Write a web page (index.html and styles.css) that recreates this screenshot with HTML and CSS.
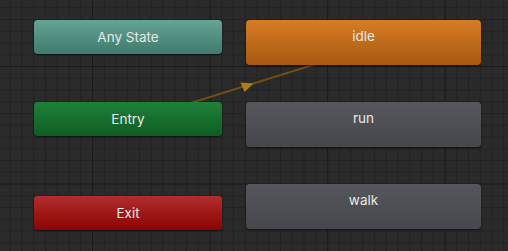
FILE: index.html
```html
<!DOCTYPE html>
<html>
<head>
<meta charset="utf-8">
<link rel="stylesheet" href="styles.css">
</head>
<body>
<div class="graph">
  <svg class="links" width="508" height="251" viewBox="0 0 508 251">
    <line x1="128" y1="122.5" x2="363" y2="49.4" class="link"/>
    <polygon points="253.5,83.5 240.5,82.5 244.5,92" class="arrow"/>
  </svg>
  <div class="node any">Any State</div>
  <div class="node entry">Entry</div>
  <div class="node exit">Exit</div>
  <div class="node state idle">idle</div>
  <div class="node state plain run">run</div>
  <div class="node state plain walk">walk</div>
</div>
</body>
</html>
```
FILE: styles.css
```css
html, body {
  margin: 0;
  padding: 0;
  background: #282828;
}
.graph {
  position: relative;
  width: 508px;
  height: 251px;
  overflow: hidden;
  background-color: #2a2a2a;
  background-image:
    linear-gradient(to right, #1b1b1b 1px, transparent 1px),
    linear-gradient(to bottom, #1b1b1b 1px, transparent 1px),
    linear-gradient(to right, #222222 1px, transparent 1px),
    linear-gradient(to bottom, #222222 1px, transparent 1px);
  background-size: 117.6px 117.6px, 117.6px 117.6px, 11.76px 11.76px, 11.76px 11.76px;
  background-position: 92px 66px, 92px 66px, 92px 66px, 92px 66px;
  font-family: Inter, "Noto Sans", sans-serif;
}
.links {
  position: absolute;
  left: 0;
  top: 0;
}
.link {
  stroke: #7a5410;
  stroke-width: 2;
  opacity: 0.9;
}
.arrow {
  fill: #b07a14;
}
.node {
  position: absolute;
  left: 34px;
  width: 188px;
  height: 34px;
  box-sizing: border-box;
  border-radius: 4px;
  display: flex;
  align-items: center;
  justify-content: center;
  color: #e8e8e8;
  font-size: 13.5px;
  box-shadow: 0 1px 2px rgba(0,0,0,0.55);
}
.any {
  top: 20px;
  background: linear-gradient(#64a595, #3f7a6c);
}
.entry {
  top: 102px;
  background: linear-gradient(#1f8139, #0d5d22);
}
.exit {
  top: 196px;
  background: linear-gradient(#b22d2d, #8c0303);
}
.state {
  left: 246px;
  width: 235px;
  height: 45px;
  align-items: flex-start;
  padding-top: 8px;
}
.idle {
  top: 20px;
  background: linear-gradient(#d67c24, #a65910);
}
.run {
  top: 102px;
}
.walk {
  top: 184px;
}
.plain {
  background: linear-gradient(#55575c, #45474b);
}
```
